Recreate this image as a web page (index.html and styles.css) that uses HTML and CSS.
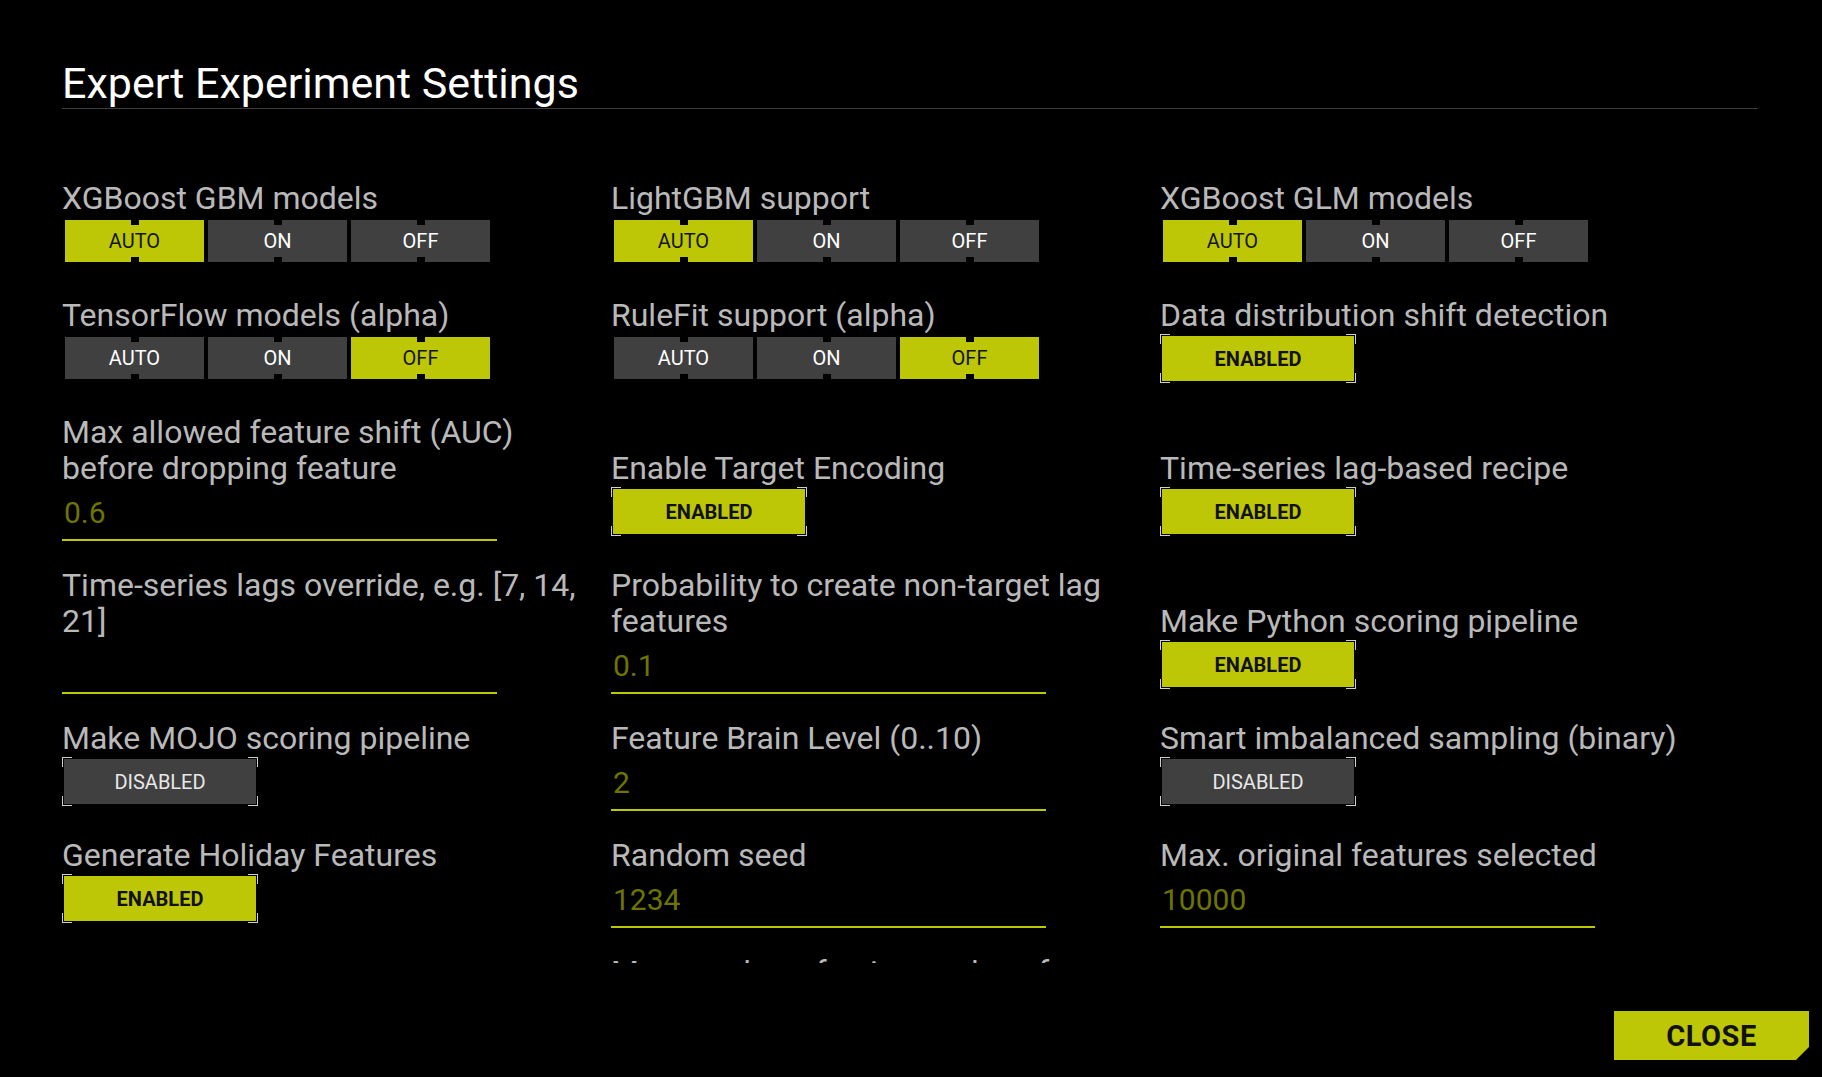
FILE: index.html
```html
<!DOCTYPE html>
<html lang="en">
<head>
<meta charset="utf-8">
<title>Expert Experiment Settings</title>
<link rel="stylesheet" href="styles.css">
</head>
<body>
<div class="header"><h1 class="title">Expert Experiment Settings</h1></div>
<div class="scroll">
  <div class="grid">
    <div class="cell">
      <div class="label">XGBoost GBM models</div>
      <div class="seg"><div class="seg-btn active">AUTO</div><div class="seg-btn">ON</div><div class="seg-btn">OFF</div></div>
    </div>
    <div class="cell">
      <div class="label">LightGBM support</div>
      <div class="seg"><div class="seg-btn active">AUTO</div><div class="seg-btn">ON</div><div class="seg-btn">OFF</div></div>
    </div>
    <div class="cell">
      <div class="label">XGBoost GLM models</div>
      <div class="seg"><div class="seg-btn active">AUTO</div><div class="seg-btn">ON</div><div class="seg-btn">OFF</div></div>
    </div>

    <div class="cell">
      <div class="label">TensorFlow models (alpha)</div>
      <div class="seg"><div class="seg-btn">AUTO</div><div class="seg-btn">ON</div><div class="seg-btn active">OFF</div></div>
    </div>
    <div class="cell">
      <div class="label">RuleFit support (alpha)</div>
      <div class="seg"><div class="seg-btn">AUTO</div><div class="seg-btn">ON</div><div class="seg-btn active">OFF</div></div>
    </div>
    <div class="cell">
      <div class="label">Data distribution shift detection</div>
      <div class="toggle on"><div class="toggle-fill">ENABLED</div></div>
    </div>

    <div class="cell">
      <div class="label">Max allowed feature shift (AUC) before dropping feature</div>
      <div class="input">0.6</div>
    </div>
    <div class="cell">
      <div class="label">Enable Target Encoding</div>
      <div class="toggle on"><div class="toggle-fill">ENABLED</div></div>
    </div>
    <div class="cell">
      <div class="label">Time-series lag-based recipe</div>
      <div class="toggle on"><div class="toggle-fill">ENABLED</div></div>
    </div>

    <div class="cell">
      <div class="label">Time-series lags override, e.g. [7, 14, 21]</div>
      <div class="input"></div>
    </div>
    <div class="cell">
      <div class="label">Probability to create non-target lag features</div>
      <div class="input">0.1</div>
    </div>
    <div class="cell">
      <div class="label">Make Python scoring pipeline</div>
      <div class="toggle on"><div class="toggle-fill">ENABLED</div></div>
    </div>

    <div class="cell">
      <div class="label">Make MOJO scoring pipeline</div>
      <div class="toggle off"><div class="toggle-fill">DISABLED</div></div>
    </div>
    <div class="cell">
      <div class="label">Feature Brain Level (0..10)</div>
      <div class="input">2</div>
    </div>
    <div class="cell">
      <div class="label">Smart imbalanced sampling (binary)</div>
      <div class="toggle off"><div class="toggle-fill">DISABLED</div></div>
    </div>

    <div class="cell">
      <div class="label">Generate Holiday Features</div>
      <div class="toggle on"><div class="toggle-fill">ENABLED</div></div>
    </div>
    <div class="cell">
      <div class="label">Random seed</div>
      <div class="input">1234</div>
    </div>
    <div class="cell">
      <div class="label">Max. original features selected</div>
      <div class="input">10000</div>
    </div>

    <div class="cell"></div>
    <div class="cell">
      <div class="label">Max number of unique values for int/float to be categoricals</div>
      <div class="input"></div>
    </div>
  </div>
</div>
<div class="footer"><button class="close" type="button">CLOSE</button></div>
</body>
</html>
```
FILE: styles.css
```css
* { box-sizing: border-box; }
html, body { margin: 0; padding: 0; background: #000; }
body {
  width: 1822px;
  height: 1077px;
  overflow: hidden;
  font-family: Roboto, "Liberation Sans", sans-serif;
}
.header {
  margin: 0 64px 0 62px;
  padding-top: 62px;
  padding-bottom: 3px;
  border-bottom: 1px solid #3d3d3d;
}
.title {
  margin: 0;
  font-size: 43px;
  line-height: 43px;
  font-weight: 400;
  color: #fff;
}
.scroll {
  height: 854px;
  overflow: hidden;
  padding: 71px 0 0 62px;
}
.grid {
  display: grid;
  grid-template-columns: repeat(3, 549px);
  row-gap: 26px;
  align-items: end;
}
.label {
  width: 545px;
  font-size: 32px;
  line-height: 36px;
  color: #b9b9b9;
}
.seg {
  display: flex;
  gap: 4px;
  margin: 4px 0 9px 3px;
}
.seg-btn {
  width: 139px;
  height: 42px;
  display: flex;
  align-items: center;
  justify-content: center;
  font-size: 20px;
  color: #fff;
  background:
    linear-gradient(#000, #000) center top / 8px 5px no-repeat,
    linear-gradient(#000, #000) center bottom / 8px 5px no-repeat,
    #404040;
}
.seg-btn.active {
  background-color: #bdc705;
  color: #141414;
}
.toggle {
  --c: #cfcfcf;
  width: 196px;
  padding: 2px;
  margin: 1px 0 5px 0;
  background:
    linear-gradient(var(--c), var(--c)) left top / 10px 1px no-repeat,
    linear-gradient(var(--c), var(--c)) left top / 1px 10px no-repeat,
    linear-gradient(var(--c), var(--c)) right top / 10px 1px no-repeat,
    linear-gradient(var(--c), var(--c)) right top / 1px 10px no-repeat,
    linear-gradient(var(--c), var(--c)) left bottom / 10px 1px no-repeat,
    linear-gradient(var(--c), var(--c)) left bottom / 1px 10px no-repeat,
    linear-gradient(var(--c), var(--c)) right bottom / 10px 1px no-repeat,
    linear-gradient(var(--c), var(--c)) right bottom / 1px 10px no-repeat;
}
.toggle-fill {
  height: 45px;
  display: flex;
  align-items: center;
  justify-content: center;
  font-size: 20px;
}
.toggle.on .toggle-fill {
  background: #bdc705;
  color: #111;
  font-weight: 700;
}
.toggle.off .toggle-fill {
  background: #404040;
  color: #e8e8e8;
}
.input {
  width: 435px;
  height: 55px;
  padding-left: 2px;
  border-bottom: 2px solid #bcc800;
  font-size: 30px;
  line-height: 53px;
  color: #6e7400;
}
.footer {
  display: flex;
  justify-content: flex-end;
  padding: 48px 13px 0 0;
}
.close {
  width: 195px;
  height: 49px;
  border: 0;
  padding: 0;
  background: #bdc705;
  color: #111;
  font-family: Roboto, "Liberation Sans", sans-serif;
  font-size: 29px;
  font-weight: 700;
  letter-spacing: 0.5px;
  clip-path: polygon(0 0, 100% 0, 100% calc(100% - 13px), calc(100% - 13px) 100%, 0 100%);
  cursor: pointer;
}
```
